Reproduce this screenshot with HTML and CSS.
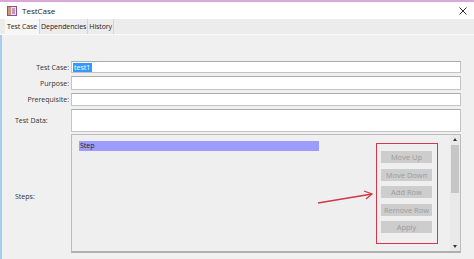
FILE: index.html
```html
<!doctype html>
<html>

<head>
  <meta charset="UTF-8" />
  <title>TestCase</title>
  <link rel="stylesheet" href="styles.css">
</head>

<body>
  <div class="window">
    <div class="titlebar">
      <svg class="app-icon" width="10" height="10" viewBox="0 0 10 10">
        <rect x="0.5" y="0.5" width="9" height="9" fill="#f3dcef" stroke="#8c4f96" />
        <rect x="1" y="1" width="3" height="8" fill="#c99a6b" />
        <line x1="5" y1="3" x2="8" y2="3" stroke="#8c4f96" />
        <line x1="5" y1="5" x2="8" y2="5" stroke="#8c4f96" />
        <line x1="5" y1="7" x2="8" y2="7" stroke="#8c4f96" />
      </svg>
      <span class="title">TestCase</span>
      <svg class="close" width="8" height="8" viewBox="0 0 8 8">
        <path d="M0.5 0.5 L7.5 7.5 M7.5 0.5 L0.5 7.5" stroke="#333" stroke-width="1" />
      </svg>
    </div>

    <div class="tabs">
      <span class="tab active">Test Case</span>
      <span class="tab">Dependencies</span>
      <span class="tab">History</span>
    </div>

    <div class="page">
      <div class="fields">
        <label class="label">Test Case:</label>
        <div class="input first"><span class="selected">test1</span></div>

        <label class="label">Purpose:</label>
        <div class="input second"></div>

        <label class="label">Prerequisite:</label>
        <div class="input third"></div>

        <label class="label left">Test Data:</label>
        <div class="input area"></div>

        <label class="label left steps-label">Steps:</label>
        <div class="steps">
          <div class="step-list">
            <div class="step-row">Step</div>
          </div>
          <div class="actions">
            <button>Move Up</button>
            <button>Move Down</button>
            <button>Add Row</button>
            <button>Remove Row</button>
            <button>Apply</button>
          </div>
          <div class="scrollbar">
            <span class="arrow-up"></span>
            <span class="thumb"></span>
            <span class="arrow-down"></span>
          </div>
        </div>
      </div>

      <svg class="pointer" width="60" height="16" viewBox="0 0 60 16">
        <path d="M1 13 L55 4" stroke="#d0394a" stroke-width="1.3" fill="none" />
        <path d="M47 1 L55 4 L49 9" stroke="#d0394a" stroke-width="1.3" fill="none" />
      </svg>
    </div>
  </div>
</body>

</html>
```

FILE: styles.css
```css
html,
body {
  margin: 0;
  width: 474px;
  height: 259px;
  overflow: hidden;
  background-color: #f0f0f0;
  font-family: "Open Sans", "Noto Sans", sans-serif;
  font-size: 7px;
  color: #222;
}

.window {
  display: flex;
  flex-direction: column;
  height: 259px;
  border-top: 2px solid #d9a6da;
  box-sizing: border-box;
}

.titlebar {
  display: flex;
  align-items: center;
  height: 17px;
  padding-inline: 7px 7px;
  background-color: white;
}

.app-icon {
  margin-right: 5px;
}

.title {
  flex: auto;
  font-size: 8px;
  color: #222;
}

.tabs {
  display: flex;
  height: 15px;
  padding-left: 5px;
  background-color: #ececec;
  border-bottom: 1px solid #fafafa;
}

.tab {
  display: flex;
  align-items: center;
  padding-inline: 1px;
  border-right: 1px solid #d4d4d4;
  font-size: 7px;
  letter-spacing: -0.1px;
}

.tab.active {
  background-color: #f7f7f7;
  padding-inline: 2px 2px;
}

.page {
  position: relative;
  flex: auto;
  border-left: 2px solid #a9cbee;
  background-color: #f0f0f0;
}

.fields {
  display: grid;
  grid-template-columns: 67px 390px;
  grid-template-rows: 12px 14px 13px 23px 118px;
  column-gap: 2px;
  row-gap: 3px;
  padding-top: 26px;
}

.label {
  display: flex;
  align-items: center;
  justify-content: flex-end;
  color: #333;
}

.label.left {
  justify-content: flex-start;
  padding-left: 13px;
}

.steps-label {
  padding-top: 4px;
}

.input {
  background-color: white;
  border: 1px solid #c4c4c4;
  border-top-color: #adadad;
  display: flex;
  align-items: center;
  padding-left: 1px;
}

.selected {
  background-color: #3399ff;
  color: white;
  padding-inline: 1px 2px;
  line-height: 9px;
}

.area {
  align-items: flex-start;
}

.steps {
  display: flex;
  margin-top: -1px;
  background-color: #efefef;
  border: 1px solid #bdbdbd;
  border-bottom: 2px solid #b0b0b0;
}

.step-list {
  flex: auto;
  padding: 6px 0 0 7px;
}

.step-row {
  width: 239px;
  height: 10px;
  line-height: 10px;
  background-color: #9c9cff;
  color: #222;
  padding-left: 1px;
}

.actions {
  display: flex;
  flex-direction: column;
  gap: 5.5px;
  width: 51px;
  height: 85px;
  margin-top: 8px;
  padding: 7px 5px 7px 4px;
  border: 1px solid #d0394a;
}

.actions button {
  height: 12px;
  padding: 0;
  border: none;
  background-color: #cdcdcd;
  color: #9b9b9b;
  font-family: "Open Sans", "Noto Sans", sans-serif;
  font-size: 7.5px;
}

.scrollbar {
  display: flex;
  flex-direction: column;
  align-items: center;
  width: 10px;
  margin-left: 12px;
  background-color: #e9e9e9;
}

.arrow-up,
.arrow-down {
  width: 0;
  height: 0;
  margin-block: 3px;
  border-left: 2px solid transparent;
  border-right: 2px solid transparent;
}

.arrow-up {
  border-bottom: 3px solid #333;
}

.arrow-down {
  border-top: 3px solid #333;
  margin-top: auto;
}

.thumb {
  width: 8px;
  height: 48px;
  margin-top: 1px;
  background-color: #c6c6c6;
}

.pointer {
  position: absolute;
  left: 315px;
  top: 155px;
}
```
